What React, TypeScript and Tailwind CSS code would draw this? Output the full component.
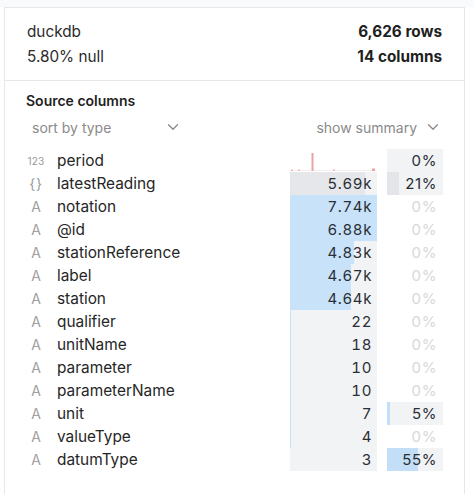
import React from "react";

type Row = {
  type: "num" | "obj" | "str";
  name: string;
  count: string;
  frac: number;
  pct: string;
  pctFrac: number;
  pctActive: boolean;
  hist?: boolean;
};

const rows: Row[] = [
  { type: "num", name: "period", count: "", frac: 0, pct: "0%", pctFrac: 0, pctActive: true, hist: true },
  { type: "obj", name: "latestReading", count: "5.69k", frac: 0.86, pct: "21%", pctFrac: 0.21, pctActive: true },
  { type: "str", name: "notation", count: "7.74k", frac: 1, pct: "0%", pctFrac: 0, pctActive: false },
  { type: "str", name: "@id", count: "6.88k", frac: 1, pct: "0%", pctFrac: 0, pctActive: false },
  { type: "str", name: "stationReference", count: "4.83k", frac: 0.73, pct: "0%", pctFrac: 0, pctActive: false },
  { type: "str", name: "label", count: "4.67k", frac: 0.7, pct: "0%", pctFrac: 0, pctActive: false },
  { type: "str", name: "station", count: "4.64k", frac: 0.7, pct: "0%", pctFrac: 0, pctActive: false },
  { type: "str", name: "qualifier", count: "22", frac: 0.004, pct: "0%", pctFrac: 0, pctActive: false },
  { type: "str", name: "unitName", count: "18", frac: 0.003, pct: "0%", pctFrac: 0, pctActive: false },
  { type: "str", name: "parameter", count: "10", frac: 0.002, pct: "0%", pctFrac: 0, pctActive: false },
  { type: "str", name: "parameterName", count: "10", frac: 0.002, pct: "0%", pctFrac: 0, pctActive: false },
  { type: "str", name: "unit", count: "7", frac: 0.001, pct: "5%", pctFrac: 0.05, pctActive: true },
  { type: "str", name: "valueType", count: "4", frac: 0.001, pct: "0%", pctFrac: 0, pctActive: false },
  { type: "str", name: "datumType", count: "3", frac: 0.0, pct: "55%", pctFrac: 0.55, pctActive: true },
];

const Chevron = () => (
  <svg width="12" height="8" viewBox="0 0 12 8" fill="none">
    <path d="M1.5 1.8 L6 6.2 L10.5 1.8" stroke="#8a8a8a" strokeWidth="1.3" strokeLinecap="round" strokeLinejoin="round" />
  </svg>
);

const TypeIcon = ({ t }: { t: Row["type"] }) => {
  if (t === "num")
    return <span className="text-[10px] tracking-[0.02em] text-[#9a9a9a]">123</span>;
  if (t === "obj")
    return <span className="text-[14px] text-[#9a9a9a] tracking-[0.05em]">{"{}"}</span>;
  return <span className="text-[14px] text-[#a0a0a0]">A</span>;
};

const Histogram = () => (
  <svg width="87" height="23" viewBox="0 0 87 23" className="block">
    <line x1="0" y1="21.5" x2="87" y2="21.5" stroke="#f6eeee" strokeWidth="1" />
    <rect x="21.5" y="4" width="2" height="18" fill="#eaa3a3" />
    <rect x="1" y="20.5" width="2" height="1.5" fill="#eeb8b8" />
    <rect x="8" y="20.5" width="2" height="1.5" fill="#eeb8b8" />
    <rect x="43" y="20.5" width="2" height="1.5" fill="#eeb8b8" />
    <rect x="82" y="19.5" width="3" height="2.5" fill="#eaa3a3" />
  </svg>
);

export default function App() {
  return (
    <div
      className="w-[474px] h-[494px] overflow-hidden bg-white"
      style={{ fontFamily: "Inter, 'Noto Sans', sans-serif" }}
    >
      <div className="h-[7px] bg-[#f9fafb]" />
      <div className="ml-[4px] w-[461px] h-[500px] border border-[#e6e7e9] bg-white">
        <div className="flex justify-between pl-[22px] pr-[22px] pt-[11px] pb-[11px] border-b border-[#e6e7e9] text-[15.3px] leading-[25px] text-[#2b2b2b]">
          <div>
            <div>duckdb</div>
            <div>5.80% null</div>
          </div>
          <div className="text-right font-bold text-[#1f1f1f]">
            <div>6,626 rows</div>
            <div>14 columns</div>
          </div>
        </div>
        <div className="pt-[10px]">
          <div className="pl-[21px] text-[14px] leading-[20px] font-semibold text-[#1f1f1f]">Source columns</div>
          <div className="flex justify-between items-center h-[26px] mt-[3px] pl-[27px] pr-[25px] text-[14px] text-[#8a8a8a]">
            <div className="flex items-center w-[147px] justify-between">
              <span>sort by type</span>
              <Chevron />
            </div>
            <div className="flex items-center gap-[10px]">
              <span>show summary</span>
              <Chevron />
            </div>
          </div>
          <div className="mt-[9px]">
            {rows.map((r) => (
              <div key={r.name} className="flex items-center h-[23px] pl-[19px] pr-[21px]">
                <div className="w-[24px] text-center leading-[23px]">
                  <TypeIcon t={r.type} />
                </div>
                <div className="flex-1 ml-[9px] text-[15.4px] text-[#262626] leading-[23px]">{r.name}</div>
                <div
                  className={
                    "relative w-[87px] h-[23px] " + (r.hist ? "bg-white" : "bg-[#f2f3f5]")
                  }
                >
                  {r.hist ? (
                    <Histogram />
                  ) : (
                    <>
                      <div
                        className={
                          "absolute left-0 top-0 bottom-0 " +
                          (r.type === "obj" ? "bg-[#e5e7ea]" : "bg-[#c8e3f9]")
                        }
                        style={{ width: `${r.frac * 100}%` }}
                      />
                      <div className="relative text-right pr-[5px] text-[15px] leading-[23px] text-[#2a2e35] tracking-[0.04em] tabular-nums">
                        {r.count}
                      </div>
                    </>
                  )}
                </div>
                <div
                  className={
                    "relative ml-[10px] w-[56px] h-[23px] " + (r.pctActive ? "bg-[#f2f3f5]" : "bg-white")
                  }
                >
                  {r.pctFrac > 0 && (
                    <div
                      className={
                        "absolute left-0 top-0 bottom-0 " +
                        (r.type === "obj" ? "bg-[#e3e5e8]" : "bg-[#c2dff7]")
                      }
                      style={{ width: `${r.pctFrac * 100}%` }}
                    />
                  )}
                  <div
                    className={
                      "relative text-right pr-[6px] text-[15px] leading-[23px] tracking-[0.04em] " +
                      (r.pctActive ? "text-[#2a2e35]" : "text-[#d7d8da]")
                    }
                  >
                    {r.pct}
                  </div>
                </div>
              </div>
            ))}
          </div>
        </div>
      </div>
    </div>
  );
}
